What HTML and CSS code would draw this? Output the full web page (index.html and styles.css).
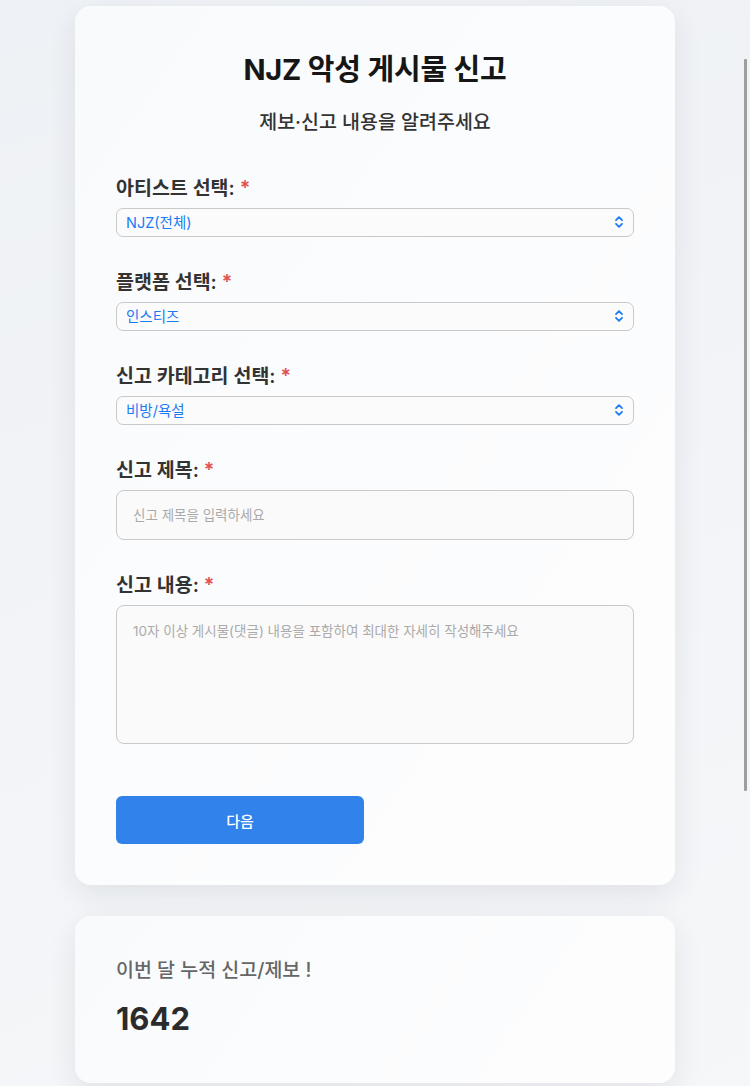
FILE: index.html
```html
<!DOCTYPE html>
<html lang="ko">
<head>
<meta charset="utf-8">
<title>NJZ 악성 게시물 신고</title>
<link rel="stylesheet" href="styles.css">
</head>
<body>
<main class="page">
  <section class="card form-card">
    <h1 class="title">NJZ 악성 게시물 신고</h1>
    <p class="subtitle">제보·신고 내용을 알려주세요</p>
    <form class="form">
      <div class="field">
        <label class="label">아티스트 선택: <span class="req">*</span></label>
        <div class="select-wrap">
          <select class="select"><option>NJZ(전체)</option></select>
          <svg class="chev" viewBox="0 0 10 14" width="10" height="14"><path d="M2 5.2 L5 2.2 L8 5.2 M2 8.8 L5 11.8 L8 8.8" fill="none" stroke="#1a7cf5" stroke-width="1.8" stroke-linecap="round" stroke-linejoin="round"/></svg>
        </div>
      </div>
      <div class="field">
        <label class="label">플랫폼 선택: <span class="req">*</span></label>
        <div class="select-wrap">
          <select class="select"><option>인스티즈</option></select>
          <svg class="chev" viewBox="0 0 10 14" width="10" height="14"><path d="M2 5.2 L5 2.2 L8 5.2 M2 8.8 L5 11.8 L8 8.8" fill="none" stroke="#1a7cf5" stroke-width="1.8" stroke-linecap="round" stroke-linejoin="round"/></svg>
        </div>
      </div>
      <div class="field">
        <label class="label">신고 카테고리 선택: <span class="req">*</span></label>
        <div class="select-wrap">
          <select class="select"><option>비방/욕설</option></select>
          <svg class="chev" viewBox="0 0 10 14" width="10" height="14"><path d="M2 5.2 L5 2.2 L8 5.2 M2 8.8 L5 11.8 L8 8.8" fill="none" stroke="#1a7cf5" stroke-width="1.8" stroke-linecap="round" stroke-linejoin="round"/></svg>
        </div>
      </div>
      <div class="field">
        <label class="label">신고 제목: <span class="req">*</span></label>
        <input class="input" type="text" placeholder="신고 제목을 입력하세요">
      </div>
      <div class="field">
        <label class="label">신고 내용: <span class="req">*</span></label>
        <textarea class="textarea" placeholder="10자 이상 게시물(댓글) 내용을 포함하여 최대한 자세히 작성해주세요"></textarea>
      </div>
      <button type="button" class="btn">다음</button>
    </form>
  </section>
  <section class="card stats-card">
    <p class="stats-label">이번 달 누적 신고/제보 !</p>
    <p class="stats-num">1642</p>
  </section>
</main>
<div class="scroll-thumb"></div>
</body>
</html>
```

FILE: styles.css
```css
* { box-sizing: border-box; }
html, body { margin: 0; }
body {
  background: linear-gradient(160deg, #eef1f5 0%, #f3f5f8 60%, #f6f7f9 100%);
  font-family: Inter, "Noto Sans CJK KR", "Noto Sans", sans-serif;
  color: #333;
  min-height: 1200px;
}
.page {
  width: 600px;
  margin: 0 auto;
  padding: 6px 0 40px;
  display: flex;
  flex-direction: column;
  gap: 31px;
}
.card {
  background: linear-gradient(125deg, #f9fafc 0%, #fbfcfd 45%, #fdfdfe 100%);
  border-radius: 16px;
  box-shadow: 0 10px 30px rgba(30, 40, 60, 0.09);
  padding: 41px;
}
.title {
  margin: 5px 0 0;
  font-size: 29px;
  line-height: 36px;
  font-weight: 700;
  text-align: center;
  color: #161616;
  letter-spacing: -0.2px;
}
.subtitle {
  margin: 21px 0 0;
  font-size: 19.5px;
  line-height: 27px;
  font-weight: 500;
  text-align: center;
  color: #333;
}
.form {
  margin-top: 39px;
  display: flex;
  flex-direction: column;
}
.field {
  display: flex;
  flex-direction: column;
  gap: 6px;
  margin-bottom: 32px;
}
.label {
  font-size: 19.5px;
  line-height: 27px;
  font-weight: 600;
  color: #333;
}
.req { color: #e05252; }
.select-wrap { position: relative; }
.select {
  appearance: none;
  -webkit-appearance: none;
  width: 100%;
  height: 29px;
  border: 1px solid #c9c9c9;
  border-radius: 7px;
  background: #fbfbfb;
  padding: 0 30px 0 9px;
  font-family: Inter, "Noto Sans CJK KR", sans-serif;
  font-size: 14.5px;
  color: #1a7cf5;
}
.chev {
  position: absolute;
  right: 10px;
  top: 7px;
  pointer-events: none;
}
.input {
  width: 100%;
  height: 50px;
  border: 1px solid #c9c9c9;
  border-radius: 8px;
  background: #fafafa;
  padding: 0 16px;
  font-family: Inter, "Noto Sans CJK KR", sans-serif;
  font-size: 13.5px;
}
.textarea {
  width: 100%;
  height: 139px;
  border: 1px solid #c9c9c9;
  border-radius: 8px;
  background: #fafafa;
  padding: 14px 16px;
  font-family: Inter, "Noto Sans CJK KR", sans-serif;
  font-size: 13.5px;
  resize: none;
  display: block;
}
.input::placeholder, .textarea::placeholder { color: #aaa; }
.btn {
  margin-top: 20px;
  width: 248px;
  height: 48px;
  border: none;
  border-radius: 6px;
  background: #3182eb;
  color: #fff;
  font-family: Inter, "Noto Sans CJK KR", sans-serif;
  font-size: 15px;
  font-weight: 500;
}
.stats-card { padding: 41px 41px 46px; }
.stats-label {
  margin: 0;
  font-size: 19.5px;
  line-height: 27px;
  font-weight: 500;
  color: #666;
}
.stats-num {
  margin: 17px 0 0;
  font-size: 31px;
  line-height: 36px;
  font-weight: 700;
  color: #2b2b2b;
}
.scroll-thumb {
  position: fixed;
  right: 3px;
  top: 59px;
  width: 3px;
  height: 732px;
  background: #9e9e9e;
  border-radius: 1px;
}
```
